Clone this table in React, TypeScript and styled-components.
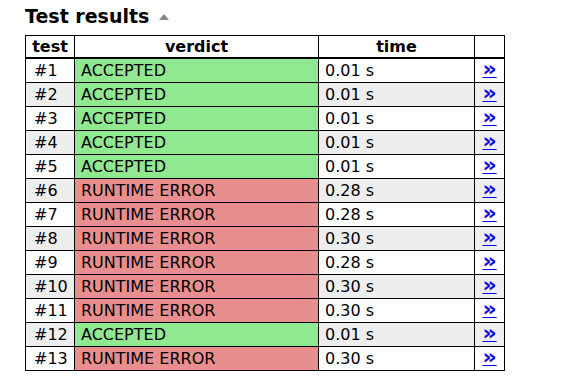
import React from "react";
import styled, { createGlobalStyle } from "styled-components";

const Global = createGlobalStyle`
  html, body { margin: 0; padding: 0; background: #fff; }
  body { font-family: "DejaVu Sans", Verdana, sans-serif; color: #000; }
`;

const Page = styled.div`
  padding: 4px 0 0 25px;
`;

const Heading = styled.h2`
  margin: 0 0 7px 0;
  font-size: 19px;
  font-weight: bold;
  line-height: 24px;
  display: flex;
  align-items: center;
  gap: 10px;
`;

const Caret = styled.span`
  width: 0;
  height: 0;
  border-left: 5px solid transparent;
  border-right: 5px solid transparent;
  border-bottom: 6px solid #888;
  margin-top: 1px;
`;

const Table = styled.table`
  border-collapse: collapse;
  font-size: 16px;
  table-layout: fixed;
  width: 479px;
`;

const Th = styled.th<{ $w: number }>`
  width: ${(p) => p.$w}px;
  border: 1px solid #000;
  border-bottom: 2px solid #000;
  height: 21px;
  padding: 0;
  text-align: center;
  font-weight: bold;
  line-height: 20px;
`;

const Row = styled.tr<{ $even: boolean }>`
  background: ${(p) => (p.$even ? "#eeeeee" : "#ffffff")};
`;

const Td = styled.td<{ $verdict?: "ok" | "re" }>`
  border: 1px solid #000;
  height: 23px;
  padding: 0 0 0 6px;
  line-height: 22px;
  white-space: nowrap;
  background: ${(p) =>
    p.$verdict === "ok" ? "#90e890" : p.$verdict === "re" ? "#e88e8e" : "inherit"};
`;

const NumCell = styled(Td)`
  padding-left: 8px;
`;

const LinkCell = styled(Td)`
  padding: 0;
  text-align: center;
  line-height: 20px;
`;

const Link = styled.a`
  color: #0000ee;
  font-weight: bold;
  text-decoration: underline;
  text-decoration-thickness: 1px;
  text-underline-offset: 1px;
  font-size: 22px;
  line-height: 18px;
`;

type Res = { v: "ok" | "re"; t: string };
const data: Res[] = [
  { v: "ok", t: "0.01 s" },
  { v: "ok", t: "0.01 s" },
  { v: "ok", t: "0.01 s" },
  { v: "ok", t: "0.01 s" },
  { v: "ok", t: "0.01 s" },
  { v: "re", t: "0.28 s" },
  { v: "re", t: "0.28 s" },
  { v: "re", t: "0.30 s" },
  { v: "re", t: "0.28 s" },
  { v: "re", t: "0.30 s" },
  { v: "re", t: "0.30 s" },
  { v: "ok", t: "0.01 s" },
  { v: "re", t: "0.30 s" },
];

export default function App() {
  return (
    <Page>
      <Global />
      <Heading>
        Test results <Caret />
      </Heading>
      <Table>
        <thead>
          <tr>
            <Th $w={48}>test</Th>
            <Th $w={243}>verdict</Th>
            <Th $w={155}>time</Th>
            <Th $w={29}></Th>
          </tr>
        </thead>
        <tbody>
          {data.map((r, i) => (
            <Row key={i} $even={i % 2 === 1}>
              <NumCell>#{i + 1}</NumCell>
              <Td $verdict={r.v}>{r.v === "ok" ? "ACCEPTED" : "RUNTIME ERROR"}</Td>
              <Td>{r.t}</Td>
              <LinkCell>
                <Link href="#">»</Link>
              </LinkCell>
            </Row>
          ))}
        </tbody>
      </Table>
    </Page>
  );
}
